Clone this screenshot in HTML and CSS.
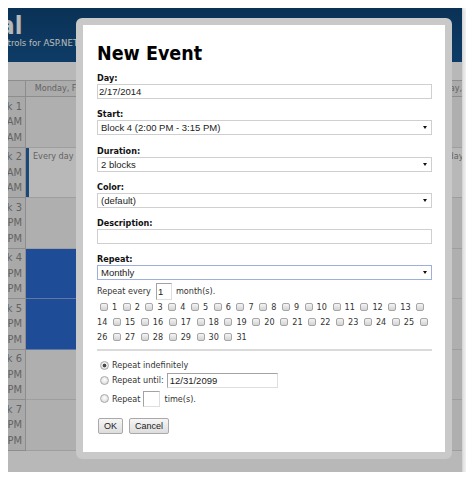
FILE: index.html
```html
<!DOCTYPE html>
<html lang="en">
<head>
    <meta charset="UTF-8">
    <meta name="viewport" content="width=device-width, initial-scale=1.0">
    <title>New Event</title>
    <link rel="stylesheet" href="styles.css">
</head>
<body>
    <div class="frame">
        <div class="page">
            <div class="header">
                <div class="brand">
                    <div class="brand-title">Tutorial</div>
                    <div class="brand-sub">Scheduling Controls for ASP.NET</div>
                </div>
            </div>

            <div class="calendar">
                <div class="corner"></div>
                <div class="day-head">Monday, February 17, 2014</div>
                <div class="day-head">Tuesday, February 18, 2014</div>
                <div class="day-head">Wednesday, February 19, 2014</div>
                <div class="day-head">Thursday, February 20, 2014</div>

                <div class="block"><span>Block 1</span><span>8:00 AM</span><span>9:15 AM</span></div>
                <div class="cell"></div>
                <div class="cell"></div>
                <div class="cell"></div>
                <div class="cell"></div>

                <div class="block"><span>Block 2</span><span>9:30 AM</span><span>10:45 AM</span></div>
                <div class="cell"><div class="event">Every day</div></div>
                <div class="cell"><div class="event">Every day</div></div>
                <div class="cell"><div class="event">Every day</div></div>
                <div class="cell"><div class="event">Every day</div></div>

                <div class="block"><span>Block 3</span><span>12:30 PM</span><span>1:45 PM</span></div>
                <div class="cell"></div>
                <div class="cell"></div>
                <div class="cell"></div>
                <div class="cell"></div>

                <div class="block"><span>Block 4</span><span>2:00 PM</span><span>3:15 PM</span></div>
                <div class="cell selected"></div>
                <div class="cell"></div>
                <div class="cell"></div>
                <div class="cell"></div>

                <div class="block"><span>Block 5</span><span>3:30 PM</span><span>4:45 PM</span></div>
                <div class="cell selected"></div>
                <div class="cell"></div>
                <div class="cell"></div>
                <div class="cell"></div>

                <div class="block"><span>Block 6</span><span>5:00 PM</span><span>6:15 PM</span></div>
                <div class="cell"></div>
                <div class="cell"></div>
                <div class="cell"></div>
                <div class="cell"></div>

                <div class="block"><span>Block 7</span><span>6:30 PM</span><span>7:45 PM</span></div>
                <div class="cell"></div>
                <div class="cell"></div>
                <div class="cell"></div>
                <div class="cell"></div>
            </div>
        </div>

        <div class="overlay"></div>

        <div class="modal">
            <h1>New Event</h1>

            <label class="field-label">Day:</label>
            <input class="field" type="text" value="2/17/2014">

            <label class="field-label">Start:</label>
            <div class="select-wrap">
                <select class="field">
                    <option>Block 4 (2:00 PM - 3:15 PM)</option>
                </select>
            </div>

            <label class="field-label">Duration:</label>
            <div class="select-wrap">
                <select class="field">
                    <option>2 blocks</option>
                </select>
            </div>

            <label class="field-label">Color:</label>
            <div class="select-wrap">
                <select class="field">
                    <option>(default)</option>
                </select>
            </div>

            <label class="field-label">Description:</label>
            <input class="field" type="text" value="">

            <label class="field-label">Repeat:</label>
            <div class="select-wrap">
                <select class="field focused">
                    <option>Monthly</option>
                </select>
            </div>

            <div class="every">Repeat every <input class="small num" type="text" value="1"> month(s).</div>

            <div class="days"><input type="checkbox"><label>1</label> <input type="checkbox"><label>2</label> <input type="checkbox"><label>3</label> <input type="checkbox"><label>4</label> <input type="checkbox"><label>5</label> <input type="checkbox"><label>6</label> <input type="checkbox"><label>7</label> <input type="checkbox"><label>8</label> <input type="checkbox"><label>9</label> <input type="checkbox"><label>10</label> <input type="checkbox"><label>11</label> <input type="checkbox"><label>12</label> <input type="checkbox"><label>13</label> <input type="checkbox"><label>14</label> <input type="checkbox"><label>15</label> <input type="checkbox"><label>16</label> <input type="checkbox"><label>17</label> <input type="checkbox"><label>18</label> <input type="checkbox"><label>19</label> <input type="checkbox"><label>20</label> <input type="checkbox"><label>21</label> <input type="checkbox"><label>22</label> <input type="checkbox"><label>23</label> <input type="checkbox"><label>24</label> <input type="checkbox"><label>25</label> <input type="checkbox"><label>26</label> <input type="checkbox"><label>27</label> <input type="checkbox"><label>28</label> <input type="checkbox"><label>29</label> <input type="checkbox"><label>30</label> <input type="checkbox"><label>31</label></div>

            <hr class="sep">

            <div class="option"><input type="radio" name="end" checked>Repeat indefinitely</div>
            <div class="option"><input type="radio" name="end">Repeat until: <input class="small until" type="text" value="12/31/2099"></div>
            <div class="option times-row"><input type="radio" name="end">Repeat <input class="small times" type="text" value=""> time(s).</div>

            <div class="actions">
                <button class="btn">OK</button>
                <button class="btn">Cancel</button>
            </div>
        </div>
    </div>
</body>
</html>
```

FILE: styles.css
```css
body {
    margin: 8px;
    background: #fff;
    font-family: "DejaVu Sans Condensed", "DejaVu Sans", sans-serif;
}

.frame {
    position: relative;
    width: 454px;
    height: 464px;
    overflow: hidden;
    background: #fff;
    box-shadow: 0 0 0 1px #d6d6d6, 1px 1px 5px 2px rgba(0, 0, 0, 0.16);
}

/* page behind the dialog */
.header {
    height: 54px;
    box-sizing: border-box;
    padding-top: 7px;
    background: linear-gradient(#0f4578, #14548f);
    color: #fff;
    overflow: hidden;
}

.brand {
    margin-left: -82px;
    white-space: nowrap;
}

.brand-title {
    font-size: 25px;
    font-weight: bold;
    line-height: 22px;
}

.brand-sub {
    font-size: 9.5px;
    line-height: 12px;
    padding-left: 15px;
}

.calendar {
    display: grid;
    grid-template-columns: 70px repeat(4, 130px);
    grid-template-rows: 16px repeat(7, 50.5px);
    margin: 18px 0 0 -52px;
    border-top: 1px solid #c4c4c4;
    font-size: 9px;
    color: #8a8a8a;
}

.corner,
.day-head {
    background: #ededed;
    border-right: 1px solid #c4c4c4;
    border-bottom: 1px solid #c4c4c4;
}

.day-head {
    text-align: center;
    line-height: 15px;
    white-space: nowrap;
    overflow: hidden;
}

.block {
    display: flex;
    flex-direction: column;
    justify-content: center;
    align-items: flex-end;
    padding-right: 3px;
    background: #eaeaea;
    border-right: 1px solid #c4c4c4;
    border-bottom: 1px solid #c4c4c4;
    font-size: 11px;
    line-height: 15.5px;
    white-space: nowrap;
}

.cell {
    background: #f3f3f3;
    border-right: 1px solid #dcdcdc;
    border-bottom: 1px solid #dcdcdc;
}

.cell.selected {
    background: #2b6ad2;
    border-bottom-color: #86a8e2;
}

.event {
    height: 100%;
    box-sizing: border-box;
    padding: 2px 4px;
    background: #fff;
    border-left: 3px solid #2566a8;
    line-height: 12px;
    white-space: nowrap;
}

.overlay {
    position: absolute;
    top: 0;
    left: 0;
    right: 0;
    bottom: 0;
    background: rgba(0, 0, 0, 0.28);
}

/* dialog */
.modal {
    position: absolute;
    left: 68px;
    top: 10px;
    width: 335px;
    padding: 17px 13px 18px 14px;
    background: #fff;
    border: 7px solid #c9c9c9;
    border-radius: 6px;
    font-size: 9px;
    color: #333;
}

.modal h1 {
    margin: 0 0 6px;
    font-size: 19.5px;
    line-height: 24px;
    color: #000;
}

.field-label {
    display: block;
    margin-top: 9.3px;
    font-weight: bold;
    line-height: 12px;
    color: #111;
}

h1 + .field-label {
    margin-top: 0;
}

.field {
    display: block;
    box-sizing: border-box;
    width: 100%;
    height: 15px;
    margin: 0;
    padding: 0 1px;
    border: 1px solid #cfcfcf;
    background: #fff;
    font: 9.5px "Liberation Sans", Arial, sans-serif;
    color: #222;
    outline: none;
}

select.field {
    appearance: none;
    -webkit-appearance: none;
    padding: 0 12px 0 3px;
    border-radius: 0;
}

select.field.focused {
    border-color: #9db0dc;
}

.select-wrap {
    position: relative;
}

.select-wrap::after {
    content: "";
    position: absolute;
    right: 5px;
    top: 6px;
    border-left: 2.5px solid transparent;
    border-right: 2.5px solid transparent;
    border-top: 3.5px solid #111;
}

.small {
    box-sizing: border-box;
    height: 17px;
    margin: 0;
    padding: 0 1px;
    border: 1px solid;
    border-color: #a3a3a3 #dedede #dedede #a3a3a3;
    font: 9.5px "Liberation Sans", Arial, sans-serif;
    color: #222;
    outline: none;
}

.every {
    display: flex;
    align-items: center;
    height: 17px;
    margin-top: 2.5px;
}

.num {
    width: 16px;
    margin: 0 4px 0 5px;
}

.days {
    line-height: 15px;
}

.days input {
    appearance: none;
    -webkit-appearance: none;
    box-sizing: border-box;
    width: 8px;
    height: 8px;
    margin: 0 4px 0 3px;
    border: 1px solid #a6a6a6;
    border-radius: 2px;
    background: linear-gradient(#f4f4f4, #d3d3d3);
    vertical-align: -1px;
}

.sep {
    margin: 4px 0 7px;
    border: 0;
    border-top: 2px solid #dadada;
}

.option {
    display: flex;
    align-items: center;
    height: 15px;
}

.option input[type="radio"] {
    appearance: none;
    -webkit-appearance: none;
    box-sizing: border-box;
    width: 9px;
    height: 9px;
    margin: 0 3px;
    border: 1px solid #a9a9a9;
    border-radius: 50%;
    background: radial-gradient(circle at 50% 40%, #fff, #d2d2d2);
}

.option input[type="radio"]:checked {
    background: radial-gradient(circle, #4a4a4a 0 1.6px, transparent 2.2px),
        radial-gradient(circle at 50% 40%, #fff, #d2d2d2);
}

.until {
    width: 111px;
    height: 15px;
    margin-left: 3px;
    padding-left: 2px;
}

.times-row {
    height: 16px;
    margin-top: 3px;
}

.times {
    width: 17px;
    height: 16px;
    margin: 0 4px 0 3px;
}

.actions {
    display: flex;
    gap: 6px;
    margin: 11px 0 0 1px;
}

.btn {
    height: 16px;
    padding: 0 5px;
    border: 1px solid #a9a9a9;
    border-radius: 2px;
    background: linear-gradient(#f6f6f6, #dddddd);
    font: 9px "Liberation Sans", Arial, sans-serif;
    color: #222;
}
```
